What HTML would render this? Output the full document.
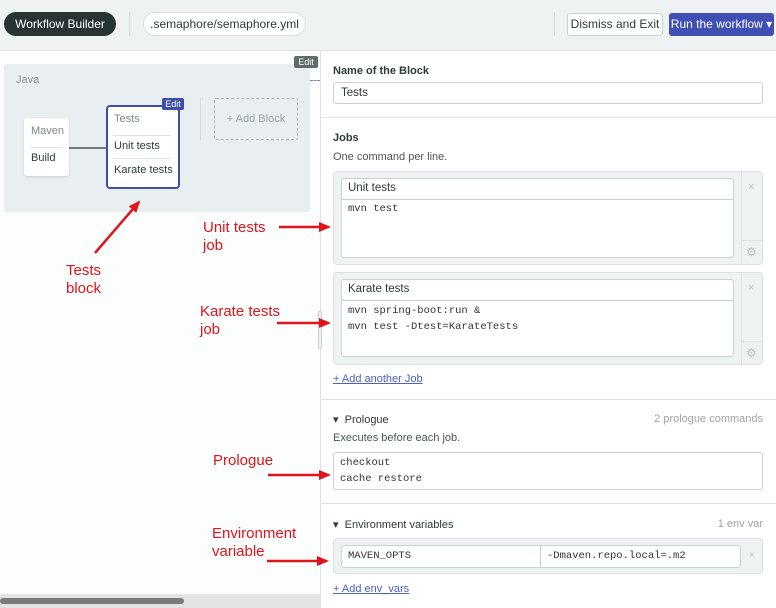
<!DOCTYPE html>
<html><head><meta charset="utf-8"><style>
*{box-sizing:border-box;margin:0;padding:0}
body{width:776px;height:608px;overflow:hidden;font-family:"Liberation Sans",sans-serif;font-size:11.5px;color:#2c3a3a;background:#fff;position:relative}
.a{position:absolute}
.mono{font-family:"Liberation Mono",monospace;font-size:10.5px;color:#333}
.lbl{font-family:"Liberation Sans",sans-serif;font-size:15px;color:#e0141c;line-height:18px}
.inp{background:#fff;border:1px solid #c9d2d2;border-radius:3px}
</style></head><body>
<div class="a" style="left:0;top:0;width:776px;height:51px;background:#eef2f2;border-bottom:1px solid #dde3e3"></div>
<div class="a" style="left:4px;top:12px;width:112px;height:24px;background:#283434;border-radius:12px;color:#fff;font-size:12px;line-height:24px;text-align:center">Workflow Builder</div>
<div class="a" style="left:129px;top:12px;width:1px;height:24px;background:#d6dcdc"></div>
<div class="a" style="left:143px;top:12px;width:163px;height:24px;background:#fff;border:1px solid #d9dfdf;border-radius:12px;font-size:12px;line-height:22px;text-align:center">.semaphore/semaphore.yml</div>
<div class="a" style="left:554px;top:12px;width:1px;height:24px;background:#d6dcdc"></div>
<div class="a" style="left:567px;top:13px;width:96px;height:23px;background:#fff;border:1px solid #c9d1d1;border-radius:3px;font-size:12px;line-height:21px;text-align:center">Dismiss and Exit</div>
<div class="a" style="left:669px;top:13px;width:105px;height:23px;background:#3f4fb4;border-radius:3px;color:#fff;font-size:12px;line-height:23px;text-align:center">Run the workflow ▾</div>

<div class="a" style="left:0;top:51px;width:320px;height:557px;background:#fcfdfd"></div>
<div class="a" style="left:4px;top:64px;width:306px;height:148px;background:#e9eff0;border-radius:3px"></div>
<div class="a" style="left:294px;top:56px;width:24px;height:12px;background:#5f6b6b;border-radius:2px;color:#fff;font-size:9px;line-height:12px;text-align:center">Edit</div>
<div class="a" style="left:310px;top:80px;width:10px;border-top:1px dashed #889"></div>
<div class="a" style="left:16px;top:74px;color:#8a9595;font-size:11px">Java</div>
<div class="a" style="left:24px;top:118px;width:45px;height:58px;background:#fff;border-radius:3px;box-shadow:0 1px 2px rgba(0,0,0,.15)"></div>
<div class="a" style="left:31px;top:125px;color:#7c8888;font-size:11px">Maven</div>
<div class="a" style="left:30px;top:147px;width:33px;height:1px;background:#dde3e3"></div>
<div class="a" style="left:31px;top:152px;font-size:11px">Build</div>
<div class="a" style="left:69px;top:147px;width:38px;height:2px;background:#707c7c"></div>
<div class="a" style="left:106px;top:105px;width:74px;height:84px;background:#fff;border:2px solid #3d4fa3;border-radius:4px"></div>
<div class="a" style="left:162px;top:98px;width:22px;height:12px;background:#3d4fa3;border-radius:2px;color:#fff;font-size:9px;line-height:12px;text-align:center">Edit</div>
<div class="a" style="left:114px;top:113px;color:#7c8888;font-size:11px">Tests</div>
<div class="a" style="left:113px;top:135px;width:58px;height:1px;background:#dde3e3"></div>
<div class="a" style="left:114px;top:140px;font-size:11px">Unit tests</div>
<div class="a" style="left:113px;top:158px;width:58px;height:1px;background:#dde3e3"></div>
<div class="a" style="left:114px;top:164px;font-size:11px">Karate tests</div>
<div class="a" style="left:200px;top:98px;width:1px;height:42px;background:#d3dada"></div>
<div class="a" style="left:214px;top:98px;width:84px;height:42px;border:1px dashed #aab4b4;border-radius:2px;color:#9aa5a5;font-size:11px;line-height:40px;text-align:center">+ Add Block</div>
<div class="a" style="left:0;top:594px;width:320px;height:14px;background:#e3e3e3"></div>
<div class="a" style="left:0;top:598px;width:184px;height:6px;background:#7a7a7a;border-radius:3px"></div>

<div class="a" style="left:320px;top:51px;width:1px;height:557px;background:#dde3e3"></div>
<div class="a" style="left:318px;top:311px;width:4px;height:38px;border:1px solid #ccc;background:#f4f4f4;border-radius:2px"></div>
<div class="a" style="left:333px;top:65px;font-weight:bold;font-size:11px">Name of the Block</div>
<div class="a inp" style="left:333px;top:82px;width:430px;height:22px;padding-left:7px;line-height:20px;font-size:11.5px">Tests</div>
<div class="a" style="left:321px;top:117px;width:455px;height:1px;background:#dde3e3"></div>
<div class="a" style="left:333px;top:132px;font-weight:bold;font-size:11px">Jobs</div>
<div class="a" style="left:333px;top:151px;font-size:11px;color:#4a5656">One command per line.</div>

<div class="a" style="left:333px;top:171px;width:430px;height:94px;background:#eef2f2;border:1px solid #dbe2e2;border-radius:4px"></div>
<div class="a" style="left:741px;top:172px;width:1px;height:92px;background:#dbe2e2"></div>
<div class="a" style="left:742px;top:240px;width:20px;height:1px;background:#dbe2e2"></div>
<div class="a inp" style="left:341px;top:178px;width:393px;height:80px"></div>
<div class="a" style="left:342px;top:199px;width:391px;height:1px;background:#c9d2d2"></div>
<div class="a" style="left:348px;top:182px;font-size:11.5px">Unit tests</div>
<div class="a mono" style="left:348px;top:203px">mvn test</div>
<div class="a" style="left:748px;top:181px;color:#b8c1c1;font-size:11px">×</div>
<div class="a" style="left:746px;top:245px;color:#b8c1c1;font-size:12px">⚙</div>

<div class="a" style="left:333px;top:272px;width:430px;height:93px;background:#eef2f2;border:1px solid #dbe2e2;border-radius:4px"></div>
<div class="a" style="left:741px;top:273px;width:1px;height:91px;background:#dbe2e2"></div>
<div class="a" style="left:742px;top:341px;width:20px;height:1px;background:#dbe2e2"></div>
<div class="a inp" style="left:341px;top:279px;width:393px;height:78px"></div>
<div class="a" style="left:342px;top:300px;width:391px;height:1px;background:#c9d2d2"></div>
<div class="a" style="left:348px;top:283px;font-size:11.5px">Karate tests</div>
<div class="a mono" style="left:348px;top:303px;line-height:16px">mvn spring-boot:run &amp;<br>mvn test -Dtest=KarateTests</div>
<div class="a" style="left:748px;top:282px;color:#b8c1c1;font-size:11px">×</div>
<div class="a" style="left:746px;top:346px;color:#b8c1c1;font-size:12px">⚙</div>
<div class="a" style="left:333px;top:373px;color:#4a62c4;font-size:11px;text-decoration:underline">+ Add another Job</div>

<div class="a" style="left:321px;top:399px;width:455px;height:1px;background:#dde3e3"></div>
<div class="a" style="left:333px;top:413px;font-size:11px">▾ &nbsp;Prologue</div>
<div class="a" style="right:13px;top:413px;font-size:11px;color:#9aa5a5">2 prologue commands</div>
<div class="a" style="left:333px;top:432px;font-size:11px;color:#4a5656">Executes before each job.</div>
<div class="a inp" style="left:333px;top:452px;width:430px;height:38px"></div>
<div class="a mono" style="left:340px;top:455px;line-height:16px">checkout<br>cache restore</div>

<div class="a" style="left:321px;top:503px;width:455px;height:1px;background:#dde3e3"></div>
<div class="a" style="left:333px;top:518px;font-size:11px">▾ &nbsp;Environment variables</div>
<div class="a" style="right:13px;top:518px;font-size:11px;color:#9aa5a5">1 env var</div>
<div class="a" style="left:333px;top:538px;width:430px;height:36px;background:#eef2f2;border:1px solid #dbe2e2;border-radius:4px"></div>
<div class="a inp" style="left:341px;top:545px;width:200px;height:23px;border-radius:3px 0 0 3px"></div>
<div class="a inp" style="left:540px;top:545px;width:201px;height:23px;border-radius:0 3px 3px 0"></div>
<div class="a mono" style="left:348px;top:550px">MAVEN_OPTS</div>
<div class="a mono" style="left:547px;top:550px">-Dmaven.repo.local=.m2</div>
<div class="a" style="left:749px;top:550px;color:#c0c8c8;font-size:10px">×</div>
<div class="a" style="left:333px;top:583px;color:#4a62c4;font-size:11px;text-decoration:underline">+ Add env_vars</div>

<div class="a lbl" style="left:66px;top:262px">Tests<br>block</div>
<div class="a lbl" style="left:203px;top:219px">Unit tests<br>job</div>
<div class="a lbl" style="left:200px;top:303px">Karate tests<br>job</div>
<div class="a lbl" style="left:213px;top:452px">Prologue</div>
<div class="a lbl" style="left:212px;top:525px">Environment<br>variable</div>
<svg class="a" style="left:0;top:0" width="776" height="608">
<defs><marker id="h" markerWidth="12" markerHeight="10" refX="10" refY="5" orient="auto" markerUnits="userSpaceOnUse"><path d="M0,0 L12,5 L0,10 z" fill="#e0141c"/></marker></defs>
<g stroke="#e0141c" stroke-width="2.5" fill="none" marker-end="url(#h)">
<line x1="95" y1="253" x2="139" y2="202"/>
<line x1="279" y1="227" x2="329" y2="227"/>
<line x1="277" y1="323" x2="329" y2="323"/>
<line x1="268" y1="475" x2="329" y2="475"/>
<line x1="267" y1="561" x2="327" y2="561"/>
</g></svg>
</body></html>
